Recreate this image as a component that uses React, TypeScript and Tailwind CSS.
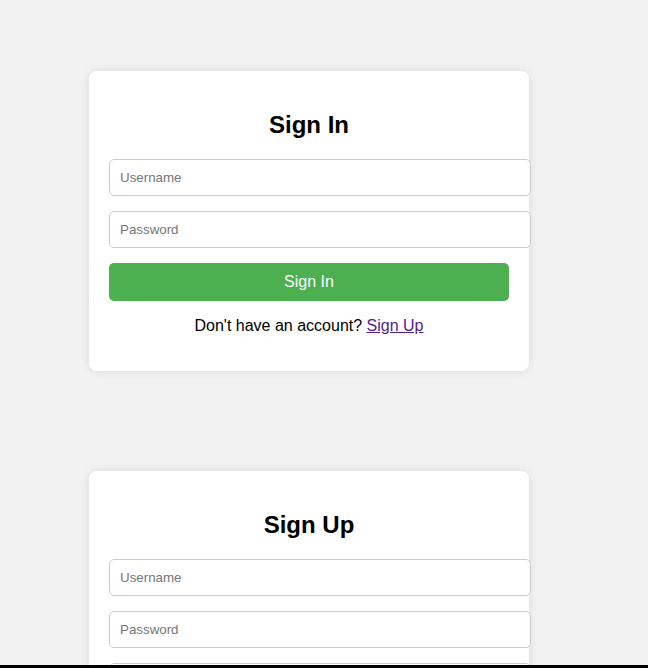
import React from "react";

const inputCls =
  "mb-[15px] box-content block h-[15px] w-[400px] rounded-[5px] border border-[#cccccc] bg-white px-[10px] py-[10px] text-[13.33px] leading-[15px] text-black placeholder:text-[#757575] outline-none";

function Card({ title, showFooter }: { title: string; showFooter: boolean }) {
  return (
    <div className="w-[440px] shrink-0 rounded-[8px] bg-white px-[20px] py-[20px] shadow-[0_0_10px_rgba(0,0,0,0.1)]">
      <h2 className="my-[19.92px] text-center text-[24px] font-bold leading-[28px] text-black">{title}</h2>
      <input type="text" placeholder="Username" className={inputCls} />
      <input type="password" placeholder="Password" className={inputCls} />
      {showFooter && (
        <>
          <button className="block h-[38px] w-[400px] rounded-[5px] bg-[#4CAF50] text-[16px] leading-[18px] text-white">
            {title}
          </button>
          <p className="my-[16px] text-center text-[16px] leading-[18px] text-black">
            Don't have an account?{" "}
            <a href="#" className="text-[#551A8B] underline">
              Sign Up
            </a>
          </p>
        </>
      )}
      {!showFooter && <input type="email" placeholder="Email" className={inputCls} />}
    </div>
  );
}

export default function App() {
  return (
    <div
      className="h-[668px] overflow-hidden bg-[#f2f2f2]"
      style={{ fontFamily: '"Liberation Sans", Arial, sans-serif' }}
    >
      <div className="flex flex-col gap-[100px] pl-[89px] pt-[71px]">
        <Card title="Sign In" showFooter={true} />
        <Card title="Sign Up" showFooter={false} />
      </div>
      <div className="fixed bottom-0 left-0 h-[3px] w-full bg-black" />
    </div>
  );
}
